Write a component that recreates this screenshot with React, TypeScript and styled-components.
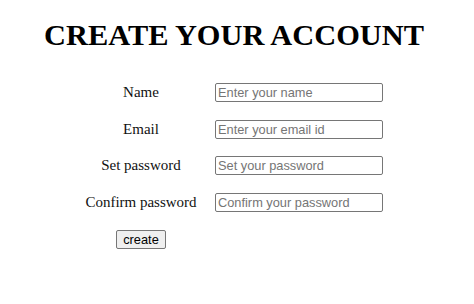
import { Fragment } from "react";
import styled, { createGlobalStyle } from "styled-components";

const GlobalStyle = createGlobalStyle`
  body {
    margin: 0;
    background: #fff;
    font-family: "Liberation Serif", "Times New Roman", serif;
  }
`;

const Page = styled.div`
  display: flex;
  flex-direction: column;
  align-items: center;
  padding: 20px 6px 0 0;
`;

const Title = styled.h1`
  margin: 0;
  font-size: 30.4px;
  line-height: 30px;
  font-weight: bold;
  color: #000;
`;

const Form = styled.form`
  display: grid;
  grid-template-columns: 112px 168px;
  column-gap: 18px;
  row-gap: 17.5px;
  align-items: center;
  margin-top: 33px;
`;

const Label = styled.label`
  font-size: 15px;
  color: #111;
  text-align: center;
  white-space: nowrap;
`;

const Input = styled.input`
  box-sizing: border-box;
  width: 168px;
  height: 19px;
  margin: 0;
  padding: 1px 2px;
  border: 1px solid #767676;
  border-radius: 2px;
  font-family: "Liberation Sans", Arial, sans-serif;
  font-size: 12.8px;
  color: #000;
  &::placeholder {
    color: #757575;
  }
`;

const ButtonCell = styled.div`
  display: flex;
  justify-content: center;
  margin-top: 1px;
`;

const Button = styled.button`
  box-sizing: border-box;
  width: 50px;
  height: 19px;
  padding: 0;
  background: #efefef;
  border: 1px solid #767676;
  border-radius: 2px;
  font-family: "Liberation Sans", Arial, sans-serif;
  font-size: 12.8px;
  color: #000;
`;

const fields = [
  { label: "Name", placeholder: "Enter your name", type: "text" },
  { label: "Email", placeholder: "Enter your email id", type: "email" },
  { label: "Set password", placeholder: "Set your password", type: "password" },
  { label: "Confirm password", placeholder: "Confirm your password", type: "password" },
];

export default function App() {
  return (
    <>
      <GlobalStyle />
      <Page>
        <Title>CREATE YOUR ACCOUNT</Title>
        <Form onSubmit={(e) => e.preventDefault()}>
          {fields.map((f) => (
            <Fragment key={f.label}>
              <Label>{f.label}</Label>
              <Input type={f.type} placeholder={f.placeholder} />
            </Fragment>
          ))}
          <ButtonCell>
            <Button type="submit">create</Button>
          </ButtonCell>
        </Form>
      </Page>
    </>
  );
}
